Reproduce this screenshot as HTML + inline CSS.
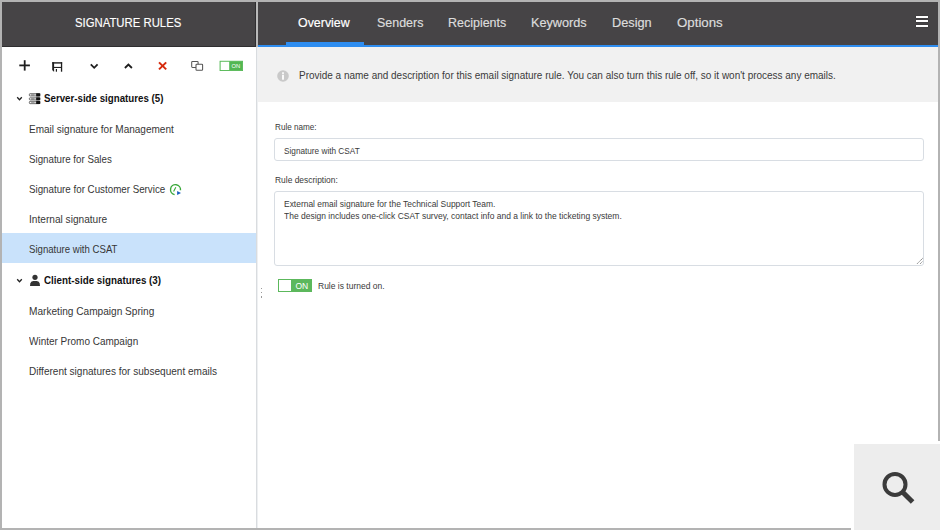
<!DOCTYPE html>
<html><head><meta charset="utf-8">
<style>
html,body{margin:0;padding:0;width:940px;height:530px;overflow:hidden;background:#fff;}
body{position:relative;font-family:"Liberation Sans",sans-serif;color:#2b2b2b;}
.a{position:absolute;white-space:nowrap;line-height:1;transform-origin:0 0;}
.frame{position:absolute;left:0;top:0;width:940px;height:530px;box-sizing:border-box;border:2px solid #b3b3b3;}
.hdrL{position:absolute;left:2px;top:2px;width:254px;height:45px;background:#464446;}
.hdrR{position:absolute;left:258px;top:2px;width:680px;height:43px;background:#464446;}
.blue{position:absolute;left:258px;top:45px;width:680px;height:2px;background:#2e8df0;}
.uline{position:absolute;left:286px;top:42px;width:78px;height:3px;background:#2e8df0;}
.sep{position:absolute;left:256px;top:2px;width:2px;height:45px;background:#b9b9b9;}
.sep2{position:absolute;left:256px;top:47px;width:1px;height:481px;background:#d9dcdf;}
.sep3{position:absolute;left:257px;top:47px;width:1px;height:481px;background:#eef0f2;}
.title{font-size:13.5px;color:#fff;transform-origin:0 0;-webkit-text-stroke:0.15px #fff;}
.tab{font-size:13.5px;color:#dcdcdc;-webkit-text-stroke:0.2px currentColor;}
.tree{font-size:10.5px;color:#363636;}
.th{font-size:10.5px;font-weight:bold;color:#111;}
.info{position:absolute;left:258px;top:47px;width:680px;height:55px;background:#f1f1f1;}
.frm{font-size:9px;color:#3a3a3a;}
.inp{position:absolute;box-sizing:border-box;border:1px solid #d8dde3;border-radius:3px;background:#fff;}
.sel{position:absolute;left:2px;top:233px;width:254px;height:30px;background:#c9e2fb;}
.search{position:absolute;left:854px;top:444px;width:86px;height:86px;background:#ededed;}
.wgap{position:absolute;background:#fff;}
</style></head><body>
<div class="frame"></div>
<div class="hdrL"></div>
<div class="sep"></div>
<div class="hdrR"></div>
<div class="blue"></div>
<div class="uline"></div>
<div class="sep2"></div><div class="sep3"></div>
<div style="position:absolute;left:2px;top:46px;width:254px;height:1px;background:#2f2e30"></div>
<div style="position:absolute;left:255px;top:2px;width:1px;height:45px;background:#2f2e30"></div>

<span class="a title" style="left:75px;top:15.7px;transform:scaleX(0.84)">SIGNATURE RULES</span>
<span class="a tab" style="left:298px;top:15.7px;color:#fff;transform:scaleX(0.919)">Overview</span>
<span class="a tab" style="left:377px;top:15.7px;transform:scaleX(0.922)">Senders</span>
<span class="a tab" style="left:448px;top:15.7px;transform:scaleX(0.924)">Recipients</span>
<span class="a tab" style="left:531px;top:15.7px;transform:scaleX(0.94)">Keywords</span>
<span class="a tab" style="left:612px;top:15.7px;transform:scaleX(0.944)">Design</span>
<span class="a tab" style="left:677px;top:15.7px;transform:scaleX(0.983)">Options</span>

<!-- hamburger -->
<div style="position:absolute;left:916px;top:16px;width:12px;height:2px;background:#fff;box-shadow:0 0 1px #111"></div>
<div style="position:absolute;left:916px;top:20.3px;width:12px;height:2px;background:#fff;box-shadow:0 0 1px #111"></div>
<div style="position:absolute;left:916px;top:24.8px;width:12px;height:2px;background:#fff;box-shadow:0 0 1px #111"></div>

<!-- info bar -->
<div class="info"></div>
<svg style="position:absolute;left:277px;top:69.5px" width="12" height="12" viewBox="0 0 12 12"><circle cx="6" cy="6" r="5.8" fill="#c9c9c9"/><rect x="5.1" y="2.3" width="1.8" height="1.6" fill="#fff"/><rect x="5.1" y="4.7" width="1.8" height="5" fill="#fff"/></svg>
<span class="a tree" style="left:299px;top:70.4px;transform:scaleX(0.95);color:#3a3a3a">Provide a name and description for this email signature rule. You can also turn this rule off, so it won't process any emails.</span>

<!-- form -->
<span class="a frm" style="left:274.5px;top:123.3px;transform:scaleX(0.904)">Rule name:</span>
<div class="inp" style="left:274px;top:138px;width:650px;height:23px"></div>
<span class="a frm" style="left:283.5px;top:146.5px;transform:scaleX(0.913)">Signature with CSAT</span>
<span class="a frm" style="left:274.5px;top:176.2px;transform:scaleX(0.936)">Rule description:</span>
<div class="inp" style="left:274px;top:191px;width:650px;height:75px"></div>
<span class="a frm" style="left:284px;top:199.8px;transform:scaleX(0.938)">External email signature for the Technical Support Team.</span>
<span class="a frm" style="left:284px;top:212.2px;transform:scaleX(0.943)">The design includes one-click CSAT survey, contact info and a link to the ticketing system.</span>

<!-- toggle -->
<div style="position:absolute;left:278px;top:279px;width:34px;height:13px;box-sizing:border-box;border:1px solid #5cb85c;background:#5cb85c"></div>
<div style="position:absolute;left:279px;top:280px;width:12px;height:11px;background:#fff"></div>
<span class="a" style="left:295.5px;top:281.5px;font-size:8.5px;color:#fff">ON</span>
<span class="a frm" style="left:317.5px;top:282.2px;transform:scaleX(0.943)">Rule is turned on.</span>

<!-- splitter dots -->
<div style="position:absolute;left:260.5px;top:287.5px;width:1.5px;height:1.5px;background:#9a9a9a"></div>
<div style="position:absolute;left:260.5px;top:291.5px;width:1.5px;height:1.5px;background:#9a9a9a"></div>
<div style="position:absolute;left:260.5px;top:296px;width:1.5px;height:1.5px;background:#9a9a9a"></div>

<!-- tree -->
<div class="sel"></div>
<span class="a th" style="left:43.7px;top:92.7px;transform:scaleX(0.926)">Server-side signatures (5)</span>
<span class="a tree" style="left:29px;top:123.9px;transform:scaleX(0.954)">Email signature for Management</span>
<span class="a tree" style="left:29px;top:153.9px;transform:scaleX(0.927)">Signature for Sales</span>
<span class="a tree" style="left:29px;top:183.8px;transform:scaleX(0.93)">Signature for Customer Service</span>
<span class="a tree" style="left:29px;top:213.9px;transform:scaleX(0.964)">Internal signature</span>
<span class="a tree" style="left:29px;top:243.9px;transform:scaleX(0.915)">Signature with CSAT</span>
<span class="a th" style="left:44px;top:274.8px;transform:scaleX(0.933)">Client-side signatures (3)</span>
<span class="a tree" style="left:29px;top:305.6px;transform:scaleX(0.963)">Marketing Campaign Spring</span>
<span class="a tree" style="left:29px;top:336px;transform:scaleX(0.95)">Winter Promo Campaign</span>
<span class="a tree" style="left:29px;top:365.6px;transform:scaleX(0.957)">Different signatures for subsequent emails</span>


<!-- toolbar icons -->
<svg style="position:absolute;left:0;top:0" width="260" height="110" viewBox="0 0 260 110">
  <g stroke="#1e1e1e" stroke-width="1.8" fill="none">
    <line x1="24.7" y1="60.2" x2="24.7" y2="70.6"/>
    <line x1="19.3" y1="65.4" x2="29.9" y2="65.4"/>
    <polyline points="90.8,64.4 94.2,67.8 97.6,64.4"/>
    <polyline points="124.9,68 128.4,64.6 131.9,68"/>
  </g>
  <g fill="#1e1e1e">
    <rect x="52.2" y="62.2" width="9.9" height="1.4"/>
    <path d="M52.2 62.2 H54.1 V71.7 H53.9 L52.2 70 Z"/>
    <rect x="60.9" y="62.2" width="1.3" height="9.5"/>
    <rect x="54" y="66.9" width="7" height="1.1"/>
    <rect x="55.8" y="69" width="1.2" height="2.7"/>
  </g>
  <g stroke="#d62a0c" stroke-width="2" fill="none">
    <line x1="159" y1="62.4" x2="166.2" y2="69.4"/>
    <line x1="166.2" y1="62.4" x2="159" y2="69.4"/>
  </g>
  <g stroke="#555" stroke-width="1.05" fill="#fff">
    <rect x="191.7" y="61.4" width="6.4" height="6" rx="0.8"/>
    <rect x="196" y="64.2" width="6.6" height="6" rx="0.8"/>
  </g>
  <rect x="220" y="61.2" width="22.6" height="9.4" fill="#52b752" stroke="#52b752" stroke-width="0.8"/>
  <rect x="220.6" y="61.8" width="8.6" height="8.2" fill="#fff"/>
  <text x="231.6" y="68.3" font-family="Liberation Sans" font-size="5.8" fill="#fff" letter-spacing="-0.2">ON</text>
  <!-- tree chevrons -->
  <polyline points="17.2,97.2 19.5,99.7 21.8,97.2" stroke="#222" stroke-width="1.3" fill="none"/>
  <!-- server icon -->
  <g>
    <rect x="29.3" y="93.6" width="10.6" height="2.5" rx="0.9" fill="#a4a4a4" stroke="#4a4a4a" stroke-width="0.6"/>
    <rect x="29.3" y="97.7" width="10.6" height="2.3" rx="0.9" fill="#a4a4a4" stroke="#4a4a4a" stroke-width="0.6"/>
    <rect x="29.3" y="101.3" width="10.6" height="2.4" rx="0.9" fill="#a4a4a4" stroke="#4a4a4a" stroke-width="0.6"/>
    <rect x="36.2" y="93.3" width="4" height="3.1" fill="#111"/>
    <rect x="36.2" y="97.4" width="4" height="2.9" fill="#111"/>
    <rect x="36.2" y="101" width="4" height="3" fill="#111"/>
    <circle cx="30.6" cy="94.85" r="0.6" fill="#fff"/>
    <circle cx="35.1" cy="94.85" r="0.6" fill="#fff"/>
    <circle cx="30.6" cy="98.85" r="0.6" fill="#fff"/>
    <circle cx="35.1" cy="98.85" r="0.6" fill="#fff"/>
    <circle cx="30.6" cy="102.5" r="0.6" fill="#fff"/>
    <circle cx="35.1" cy="102.5" r="0.6" fill="#fff"/>
  </g>
</svg>
<svg style="position:absolute;left:0;top:260px" width="60" height="40" viewBox="0 260 60 40">
  <polyline points="17.2,279.2 19.5,281.7 21.8,279.2" stroke="#222" stroke-width="1.3" fill="none"/>
  <circle cx="35" cy="277.3" r="2.6" fill="#333"/>
  <path d="M33.2 280.9 H36.8 Q39.3 281.1 39.7 283.6 L40 285.9 H30 L30.3 283.6 Q30.7 281.1 33.2 280.9 Z" fill="#333"/>
</svg>
<svg style="position:absolute;left:165px;top:180px" width="20" height="20" viewBox="165 180 20 20">
  <path d="M180.5 190.2 A5 5 0 1 0 174.6 194.6" stroke="#3aa83a" stroke-width="1.4" fill="none"/>
  <line x1="175.8" y1="187.2" x2="173.6" y2="191.4" stroke="#3aa83a" stroke-width="1.1"/>
  <path d="M177.1 191 L181 193 L177.1 195 Z" fill="#1a5fc0"/>
</svg>
<!-- resize handle -->
<svg style="position:absolute;left:910px;top:252px" width="16" height="16" viewBox="910 252 16 16">
  <line x1="917.3" y1="263.6" x2="922.6" y2="258.3" stroke="#555" stroke-width="1" stroke-dasharray="1 0.7"/>
  <line x1="920.4" y1="263.6" x2="922.6" y2="261.4" stroke="#555" stroke-width="1" stroke-dasharray="1 0.7"/>
</svg>

<!-- search -->
<div class="wgap" style="left:851px;top:528px;width:3px;height:2px"></div>
<div class="wgap" style="left:938px;top:441px;width:2px;height:3px"></div>
<div class="search"></div>
<svg style="position:absolute;left:878px;top:468px" width="40" height="40" viewBox="0 0 40 40"><circle cx="17" cy="16.4" r="10.5" fill="none" stroke="#3b3b3b" stroke-width="4"/><line x1="24.5" y1="24" x2="34.6" y2="34.1" stroke="#3b3b3b" stroke-width="5"/></svg>
</body></html>
